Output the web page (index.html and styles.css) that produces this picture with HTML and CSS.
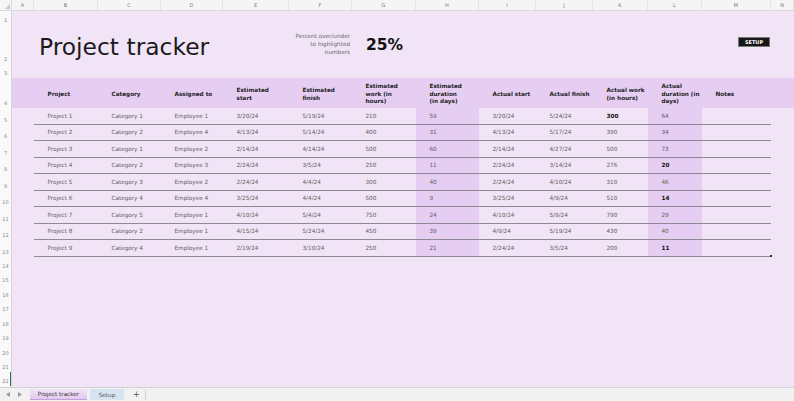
FILE: index.html
```html
<!DOCTYPE html>
<html lang="en">
<head>
<meta charset="utf-8">
<title>Project tracker</title>
<link rel="stylesheet" href="styles.css">
</head>
<body>
<div class="app">
  <div class="colhead">
    <div class="corner"></div>
    <div class="ch">A</div><div class="ch">B</div><div class="ch">C</div><div class="ch">D</div>
    <div class="ch">E</div><div class="ch">F</div><div class="ch">G</div><div class="ch">H</div>
    <div class="ch">I</div><div class="ch">J</div><div class="ch">K</div><div class="ch">L</div>
    <div class="ch">M</div><div class="ch">N</div>
  </div>
  <div class="main">
    <div class="rowhead">
      <div class="rh r1">1</div>
      <div class="rh r2">2</div>
      <div class="rh r3">3</div>
      <div class="rh r4">4</div>
      <div class="rh rd">5</div><div class="rh rd">6</div><div class="rh rd">7</div>
      <div class="rh rd">8</div><div class="rh rd">9</div><div class="rh rd">10</div>
      <div class="rh rd">11</div><div class="rh rd">12</div><div class="rh rd">13</div>
      <div class="rh re">14</div><div class="rh re">15</div><div class="rh re">16</div>
      <div class="rh re">17</div><div class="rh re">18</div><div class="rh re">19</div>
      <div class="rh re">20</div><div class="rh re">21</div><div class="rh re sel">22</div>
    </div>
    <div class="sheet">
      <div class="top">
        <div class="title">Project tracker</div>
        <div class="note">Percent over/under<br>to highlighted<br>numbers</div>
        <div class="pct">25%</div>
        <div class="setupcell"><div class="setup">SETUP</div></div>
      </div>
      <div class="table">
        <div class="row thead">
          <i></i>
          <div class="c">Project</div>
          <div class="c">Category</div>
          <div class="c">Assigned to</div>
          <div class="c">Estimated<br>start</div>
          <div class="c">Estimated<br>finish</div>
          <div class="c">Estimated<br>work (in<br>hours)</div>
          <div class="c">Estimated<br>duration<br>(in days)</div>
          <div class="c">Actual start</div>
          <div class="c">Actual finish</div>
          <div class="c">Actual work<br>(in hours)</div>
          <div class="c">Actual<br>duration (in<br>days)</div>
          <div class="c">Notes</div>
          <i></i>
        </div>
        <div class="row"><i></i><div class="c">Project 1</div><div class="c">Category 1</div><div class="c">Employee 1</div><div class="c">3/20/24</div><div class="c">5/19/24</div><div class="c">210</div><div class="c hl">59</div><div class="c">3/20/24</div><div class="c">5/24/24</div><div class="c b">300</div><div class="c hl">64</div><div class="c"></div><i></i></div>
        <div class="row"><i></i><div class="c">Project 2</div><div class="c">Category 2</div><div class="c">Employee 4</div><div class="c">4/13/24</div><div class="c">5/14/24</div><div class="c">400</div><div class="c hl">31</div><div class="c">4/13/24</div><div class="c">5/17/24</div><div class="c">390</div><div class="c hl">34</div><div class="c"></div><i></i></div>
        <div class="row"><i></i><div class="c">Project 3</div><div class="c">Category 1</div><div class="c">Employee 2</div><div class="c">2/14/24</div><div class="c">4/14/24</div><div class="c">500</div><div class="c hl">60</div><div class="c">2/14/24</div><div class="c">4/27/24</div><div class="c">500</div><div class="c hl">73</div><div class="c"></div><i></i></div>
        <div class="row"><i></i><div class="c">Project 4</div><div class="c">Category 2</div><div class="c">Employee 3</div><div class="c">2/24/24</div><div class="c">3/5/24</div><div class="c">250</div><div class="c hl">11</div><div class="c">2/24/24</div><div class="c">3/14/24</div><div class="c">276</div><div class="c hl b">20</div><div class="c"></div><i></i></div>
        <div class="row"><i></i><div class="c">Project 5</div><div class="c">Category 3</div><div class="c">Employee 2</div><div class="c">2/24/24</div><div class="c">4/4/24</div><div class="c">300</div><div class="c hl">40</div><div class="c">2/24/24</div><div class="c">4/10/24</div><div class="c">310</div><div class="c hl">46</div><div class="c"></div><i></i></div>
        <div class="row"><i></i><div class="c">Project 6</div><div class="c">Category 4</div><div class="c">Employee 4</div><div class="c">3/25/24</div><div class="c">4/4/24</div><div class="c">500</div><div class="c hl">9</div><div class="c">3/25/24</div><div class="c">4/9/24</div><div class="c">510</div><div class="c hl b">14</div><div class="c"></div><i></i></div>
        <div class="row"><i></i><div class="c">Project 7</div><div class="c">Category 5</div><div class="c">Employee 1</div><div class="c">4/10/24</div><div class="c">5/4/24</div><div class="c">750</div><div class="c hl">24</div><div class="c">4/10/24</div><div class="c">5/9/24</div><div class="c">790</div><div class="c hl">29</div><div class="c"></div><i></i></div>
        <div class="row"><i></i><div class="c">Project 8</div><div class="c">Category 2</div><div class="c">Employee 1</div><div class="c">4/15/24</div><div class="c">5/24/24</div><div class="c">450</div><div class="c hl">39</div><div class="c">4/9/24</div><div class="c">5/19/24</div><div class="c">430</div><div class="c hl">40</div><div class="c"></div><i></i></div>
        <div class="row"><i></i><div class="c">Project 9</div><div class="c">Category 4</div><div class="c">Employee 1</div><div class="c">2/19/24</div><div class="c">3/10/24</div><div class="c">250</div><div class="c hl">21</div><div class="c">2/24/24</div><div class="c">3/5/24</div><div class="c">200</div><div class="c hl b">11</div><div class="c last"><span class="handle"></span></div><i></i></div>
      </div>
    </div>
  </div>
  <div class="tabs">
    <span class="nav">
      <svg width="4" height="5" viewBox="0 0 4 5"><path d="M4 0 L0 2.5 L4 5 Z" fill="#9a9a9a"/></svg>
    </span>
    <span class="nav nav2">
      <svg width="4" height="5" viewBox="0 0 4 5"><path d="M0 0 L4 2.5 L0 5 Z" fill="#9a9a9a"/></svg>
    </span>
    <div class="tab active">Project tracker</div>
    <div class="tab setuptab">Setup</div>
    <div class="plus">+</div>
    <div class="sep"></div>
  </div>
</div>
</body>
</html>
```

FILE: styles.css
```css
:root {
  --cols: 22px 64px 63px 62px 66px 63px 64px 63px 57px 57px 55px 54px 69px 23px;
  --band: #e6cdf2;
  --bg: #f2e4f7;
}
* { box-sizing: border-box; margin: 0; padding: 0; }
html, body { width: 794px; height: 401px; overflow: hidden; }
body {
  font-family: "DejaVu Sans", Verdana, sans-serif;
  background: var(--bg);
}
.app { display: flex; flex-direction: column; height: 401px; }

/* column headers */
.colhead {
  display: grid;
  grid-template-columns: 12px var(--cols);
  height: 11px;
  background: #f5f5f5;
  border-bottom: 1px solid #d9d9d9;
}
.corner { position: relative; border-right: 1px solid #dcdcdc; }
.corner::after {
  content: "";
  position: absolute;
  right: 1px; bottom: 1px;
  border-left: 5px solid transparent;
  border-bottom: 5px solid #c8c8c8;
}
.ch {
  font-size: 5px;
  color: #7a7a7a;
  display: flex;
  align-items: center;
  justify-content: center;
  border-right: 1px solid #e4e4e4;
}

/* main area */
.main { display: flex; flex: 1; min-height: 0; }
.rowhead {
  width: 12px;
  flex: none;
  background: #f9f9f9;
  border-right: 1px solid #d6d6d6;
  display: flex;
  flex-direction: column;
}
.rh {
  font-size: 5px;
  color: #8a8a8a;
  display: flex;
  align-items: flex-end;
  justify-content: center;
  padding-bottom: 2px;
  flex: none;
}
.r1 { height: 14px; }
.r2 { height: 39px; }
.r3 { height: 14px; }
.r4 { height: 30px; }
.rd { height: 16.5px; }
.re { height: 14.44px; }
.sel { box-shadow: inset -1px 0 0 #2f6f45; }

.sheet { flex: 1; display: flex; flex-direction: column; }

/* top area */
.top {
  display: grid;
  grid-template-columns: var(--cols);
  height: 67px;
  align-items: start;
}
.title {
  grid-column: 2 / 5;
  grid-row: 1;
  padding-left: 5px;
  margin-top: 22px;
  font-size: 23.4px;
  line-height: 28px;
  color: #1a1a1a;
  white-space: nowrap;
}
.note {
  grid-column: 5 / 7;
  grid-row: 1;
  text-align: right;
  padding-right: 2px;
  margin-top: 22px;
  font-size: 5.7px;
  line-height: 7.8px;
  color: #666;
}
.pct {
  grid-column: 7;
  grid-row: 1;
  padding-left: 14px;
  margin-top: 25px;
  font-size: 15.5px;
  line-height: 18px;
  font-weight: bold;
  color: #111;
  white-space: nowrap;
}
.setupcell {
  grid-column: 13;
  grid-row: 1;
  padding-left: 36px;
  margin-top: 26px;
}
.setup {
  width: 32px;
  height: 10px;
  background: #161616;
  border: 1px solid #7a7a7a;
  color: #fff;
  font-size: 5px;
  font-weight: bold;
  display: flex;
  align-items: center;
  justify-content: center;
}

/* table */
.row {
  display: grid;
  grid-template-columns: var(--cols);
  height: 16.5px;
}
.thead { height: 30px; background: var(--band); }
.c {
  padding-left: 13.5px;
  display: flex;
  align-items: center;
  font-size: 5.7px;
  color: #5c5c5c;
  white-space: nowrap;
  border-bottom: 1px solid #8f8896;
  position: relative;
}
.thead .c {
  border-bottom: none;
  padding-top: 3px;
  font-weight: bold;
  color: #1e1e1e;
  line-height: 7.8px;
}
.hl { background: var(--band); }
.b { font-weight: bold; color: #111; }
.handle {
  position: absolute;
  right: -1px;
  bottom: -1.5px;
  width: 2px;
  height: 2px;
  background: #333;
}

/* tabs */
.tabs {
  height: 14px;
  flex: none;
  background: #f1f1f1;
  border-top: 1px solid #d2d2d2;
  display: flex;
  align-items: center;
  font-size: 5.7px;
}
.nav { display: flex; margin-left: 6px; }
.nav2 { margin-left: 8px; }
.tab {
  height: 11px;
  display: flex;
  align-items: center;
  justify-content: center;
  color: #333;
}
.active {
  margin-left: 8px;
  width: 57px;
  background: linear-gradient(#f1e6f7, #e2c9f0);
  border-bottom: 1px solid #c39fdb;
}
.setuptab {
  margin-left: 3px;
  width: 34px;
  background: #d6e4f2;
  color: #555;
}
.plus {
  margin-left: 9px;
  font-size: 8px;
  color: #555;
}
.sep {
  margin-left: 5px;
  width: 1px;
  height: 10px;
  background: #cfcfcf;
}
```
